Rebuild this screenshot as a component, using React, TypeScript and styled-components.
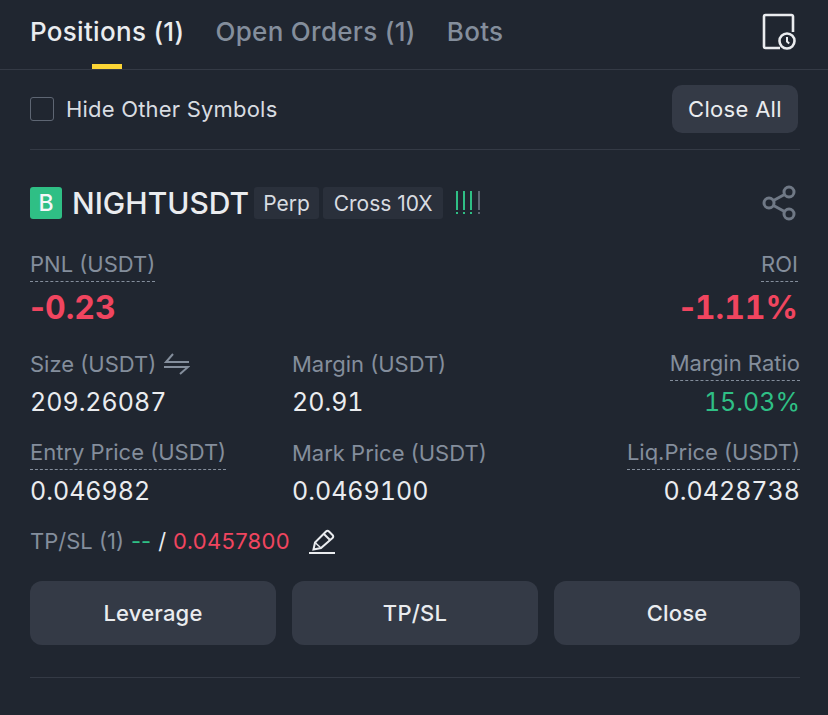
import React from "react";
import styled, { createGlobalStyle } from "styled-components";

const GlobalStyle = createGlobalStyle`
  html, body {
    margin: 0;
    padding: 0;
    background: #202630;
  }
  * {
    box-sizing: border-box;
  }
`;

const Page = styled.div`
  width: 828px;
  height: 715px;
  overflow: hidden;
  background: #202630;
  font-family: "Inter", "Lato", sans-serif;
  color: #eaecef;
`;

const TabBar = styled.div`
  height: 70px;
  padding: 0 30px;
  display: flex;
  justify-content: space-between;
  border-bottom: 1px solid #343a45;
`;

const Tabs = styled.div`
  display: flex;
  gap: 31px;
`;

const Tab = styled.div<{ $active?: boolean }>`
  position: relative;
  padding-top: 15px;
  font-size: 26px;
  line-height: 34px;
  letter-spacing: 0.3px;
  font-weight: 500;
  color: ${(p) => (p.$active ? "#eaecef" : "#848e9c")};
  ${(p) =>
    p.$active &&
    `
    &::after {
      content: "";
      position: absolute;
      left: 62px;
      bottom: 0;
      width: 30px;
      height: 5px;
      background: #fcd535;
    }
  `}
`;

const HistoryButton = styled.div`
  padding: 13px 2px 0 0;
`;

const Content = styled.div`
  padding: 0 28px 0 30px;
`;

const FilterRow = styled.div`
  height: 80px;
  display: flex;
  align-items: center;
  justify-content: space-between;
  padding: 0 2px 2px 0;
  border-bottom: 1px solid #343a45;
`;

const CheckLabel = styled.div`
  display: flex;
  align-items: center;
  gap: 12px;
  font-size: 22px;
  letter-spacing: 0.2px;
  color: #d8dce1;
`;

const CheckBox = styled.div`
  width: 24px;
  height: 24px;
  border: 1.5px solid #5e6673;
  border-radius: 3px;
`;

const CloseAll = styled.div`
  width: 126px;
  height: 48px;
  display: flex;
  align-items: center;
  justify-content: center;
  border-radius: 10px;
  background: #343a46;
  font-size: 22px;
  letter-spacing: 0.3px;
  color: #eaecef;
`;

const SymbolRow = styled.div`
  display: flex;
  align-items: center;
  margin-top: 37px;
  height: 32px;
  padding-right: 2px;
`;

const SideBadge = styled.div`
  width: 32px;
  height: 32px;
  display: flex;
  align-items: center;
  justify-content: center;
  border-radius: 3px;
  background: #2fbf85;
  color: #f4f6f8;
  font-size: 23px;
  font-weight: 500;
  margin-right: 10px;
`;

const SymbolName = styled.div`
  font-size: 30px;
  font-weight: 500;
  color: #eaecef;
  margin-right: 5px;
`;

const Tag = styled.div<{ $width: number }>`
  width: ${(p) => p.$width}px;
  height: 32px;
  margin-right: 4px;
  display: flex;
  align-items: center;
  justify-content: center;
  border-radius: 3px;
  background: #2a303b;
  font-size: 21px;
  color: #d8dce1;
`;

const SignalWrap = styled.div`
  margin-left: 9px;
  display: flex;
`;

const ShareWrap = styled.div`
  margin-left: auto;
  display: flex;
`;

const StatsTop = styled.div`
  display: flex;
  justify-content: space-between;
  margin-top: 28px;
  padding-right: 2px;
`;

const StatGrid = styled.div`
  display: grid;
  grid-template-columns: 262px 1fr auto;
  margin-top: 18px;
  row-gap: 17px;
`;

const Cell = styled.div<{ $right?: boolean }>`
  display: flex;
  flex-direction: column;
  align-items: ${(p) => (p.$right ? "flex-end" : "flex-start")};
`;

const Label = styled.div<{ $dotted?: boolean }>`
  display: inline-flex;
  align-items: center;
  gap: 8px;
  height: 35px;
  font-size: 22px;
  line-height: 34px;
  color: #848e9c;
  ${(p) => p.$dotted && "border-bottom: 1px dashed #848e9c;"}
`;

const BigValue = styled.div<{ $tone: string }>`
  margin-top: 6px;
  font-size: 32px;
  line-height: 40px;
  font-weight: 700;
  font-variant-numeric: tabular-nums;
  color: ${(p) => p.$tone};
`;

const Minus = styled.span`
  font-variant-numeric: normal;
`;

const Value = styled.div<{ $tone?: string }>`
  margin-top: 5px;
  font-size: 25px;
  line-height: 32px;
  font-variant-numeric: tabular-nums;
  color: ${(p) => p.$tone || "#eaecef"};
`;

const TpSlRow = styled.div`
  display: flex;
  align-items: center;
  margin-top: 17px;
  height: 34px;
  font-size: 22px;
  color: #848e9c;
`;

const Tone = styled.span<{ $tone: string }>`
  color: ${(p) => p.$tone};
  margin-left: 7px;
`;

const StopPrice = styled(Tone)`
  letter-spacing: 0.3px;
`;

const EditWrap = styled.div`
  margin-left: 19px;
  display: flex;
`;

const Actions = styled.div`
  display: grid;
  grid-template-columns: repeat(3, 246px);
  gap: 16px;
  margin-top: 23px;
`;

const ActionButton = styled.div`
  height: 64px;
  display: flex;
  align-items: center;
  justify-content: center;
  border-radius: 12px;
  background: #343a46;
  font-size: 22px;
  letter-spacing: 0.2px;
  font-weight: 500;
  color: #eaecef;
`;

const BottomLine = styled.div`
  margin-top: 32px;
  border-top: 1px solid #343a45;
`;

const HistoryIcon = () => (
  <svg width="34" height="38" viewBox="0 0 34 38" fill="none" stroke="#eaecef" strokeWidth="2.6">
    <path d="M18 35H3.500a1.500 1.500 0 0 1-1.500-1.500V3.500A1.500 1.500 0 0 1 3.500 2H29.500a1.500 1.500 0 0 1 1.500 1.500V19" />
    <circle cx="25" cy="28" r="7.5" />
    <path d="M25 24v4.5l2.2 2" strokeWidth="2" />
  </svg>
);

const SignalIcon = () => (
  <svg width="26" height="26" viewBox="0 0 26 26">
    {[1, 8, 15, 23].map((x, i) => (
      <g key={x} fill={i === 3 ? "#5e6673" : "#2fbf85"}>
        <rect x={x - 1} y="1" width="2" height="19" />
        <rect x={x - 1} y="22" width="2" height="2" />
      </g>
    ))}
  </svg>
);

const ShareIcon = () => (
  <svg width="36" height="36" viewBox="0 0 36 36" fill="none" stroke="#6f7885" strokeWidth="3">
    <circle cx="7" cy="18" r="5" />
    <circle cx="27" cy="7" r="5" />
    <circle cx="27" cy="29" r="5" />
    <path d="M11.5 15.5L22.5 9.5M11.5 20.5L22.5 26.5" />
  </svg>
);

const SwapIcon = () => (
  <svg width="26" height="24" viewBox="0 0 26 24" fill="none" stroke="#848e9c" strokeWidth="2">
    <path d="M25 10H2L9 2" />
    <path d="M0 15H24L16 22" />
  </svg>
);

const EditIcon = () => (
  <svg width="27" height="27" viewBox="0 0 27 27" fill="none" stroke="#eaecef" strokeWidth="2">
    <path d="M4.500 21.500L6 14.500L17 3.500Q18.500 2 20 3.500L23.500 7Q25 8.500 23.500 10L12 20Z" />
    <path d="M14.700 5.700L20.800 11.800" />
    <path d="M6 14.500L12 20" strokeWidth="1.500" />
    <path d="M0 25H26" />
  </svg>
);

const App: React.FC = () => {
  return (
    <Page>
      <GlobalStyle />
      <TabBar>
        <Tabs>
          <Tab $active>Positions (1)</Tab>
          <Tab>Open Orders (1)</Tab>
          <Tab>Bots</Tab>
        </Tabs>
        <HistoryButton>
          <HistoryIcon />
        </HistoryButton>
      </TabBar>
      <Content>
        <FilterRow>
          <CheckLabel>
            <CheckBox />
            Hide Other Symbols
          </CheckLabel>
          <CloseAll>Close All</CloseAll>
        </FilterRow>
        <SymbolRow>
          <SideBadge>B</SideBadge>
          <SymbolName>NIGHTUSDT</SymbolName>
          <Tag $width={65}>Perp</Tag>
          <Tag $width={120}>Cross 10X</Tag>
          <SignalWrap>
            <SignalIcon />
          </SignalWrap>
          <ShareWrap>
            <ShareIcon />
          </ShareWrap>
        </SymbolRow>
        <StatsTop>
          <Cell>
            <Label $dotted>PNL (USDT)</Label>
            <BigValue $tone="#f0455f">
              <Minus>-</Minus>0.23
            </BigValue>
          </Cell>
          <Cell $right>
            <Label $dotted>ROI</Label>
            <BigValue $tone="#f0455f">
              <Minus>-</Minus>1.11%
            </BigValue>
          </Cell>
        </StatsTop>
        <StatGrid>
          <Cell>
            <Label>
              Size (USDT) <SwapIcon />
            </Label>
            <Value>209.26087</Value>
          </Cell>
          <Cell>
            <Label>Margin (USDT)</Label>
            <Value>20.91</Value>
          </Cell>
          <Cell $right>
            <Label $dotted>Margin Ratio</Label>
            <Value $tone="#2fbf85">15.03%</Value>
          </Cell>
          <Cell>
            <Label $dotted>Entry Price (USDT)</Label>
            <Value>0.046982</Value>
          </Cell>
          <Cell>
            <Label>Mark Price (USDT)</Label>
            <Value>0.0469100</Value>
          </Cell>
          <Cell $right>
            <Label $dotted>Liq.Price (USDT)</Label>
            <Value>0.0428738</Value>
          </Cell>
        </StatGrid>
        <TpSlRow>
          TP/SL (1)
          <Tone $tone="#2fbf85">--</Tone>
          <Tone $tone="#eaecef">/</Tone>
          <StopPrice $tone="#f0455f">0.0457800</StopPrice>
          <EditWrap>
            <EditIcon />
          </EditWrap>
        </TpSlRow>
        <Actions>
          <ActionButton>Leverage</ActionButton>
          <ActionButton>TP/SL</ActionButton>
          <ActionButton>Close</ActionButton>
        </Actions>
        <BottomLine />
      </Content>
    </Page>
  );
};

export default App;
